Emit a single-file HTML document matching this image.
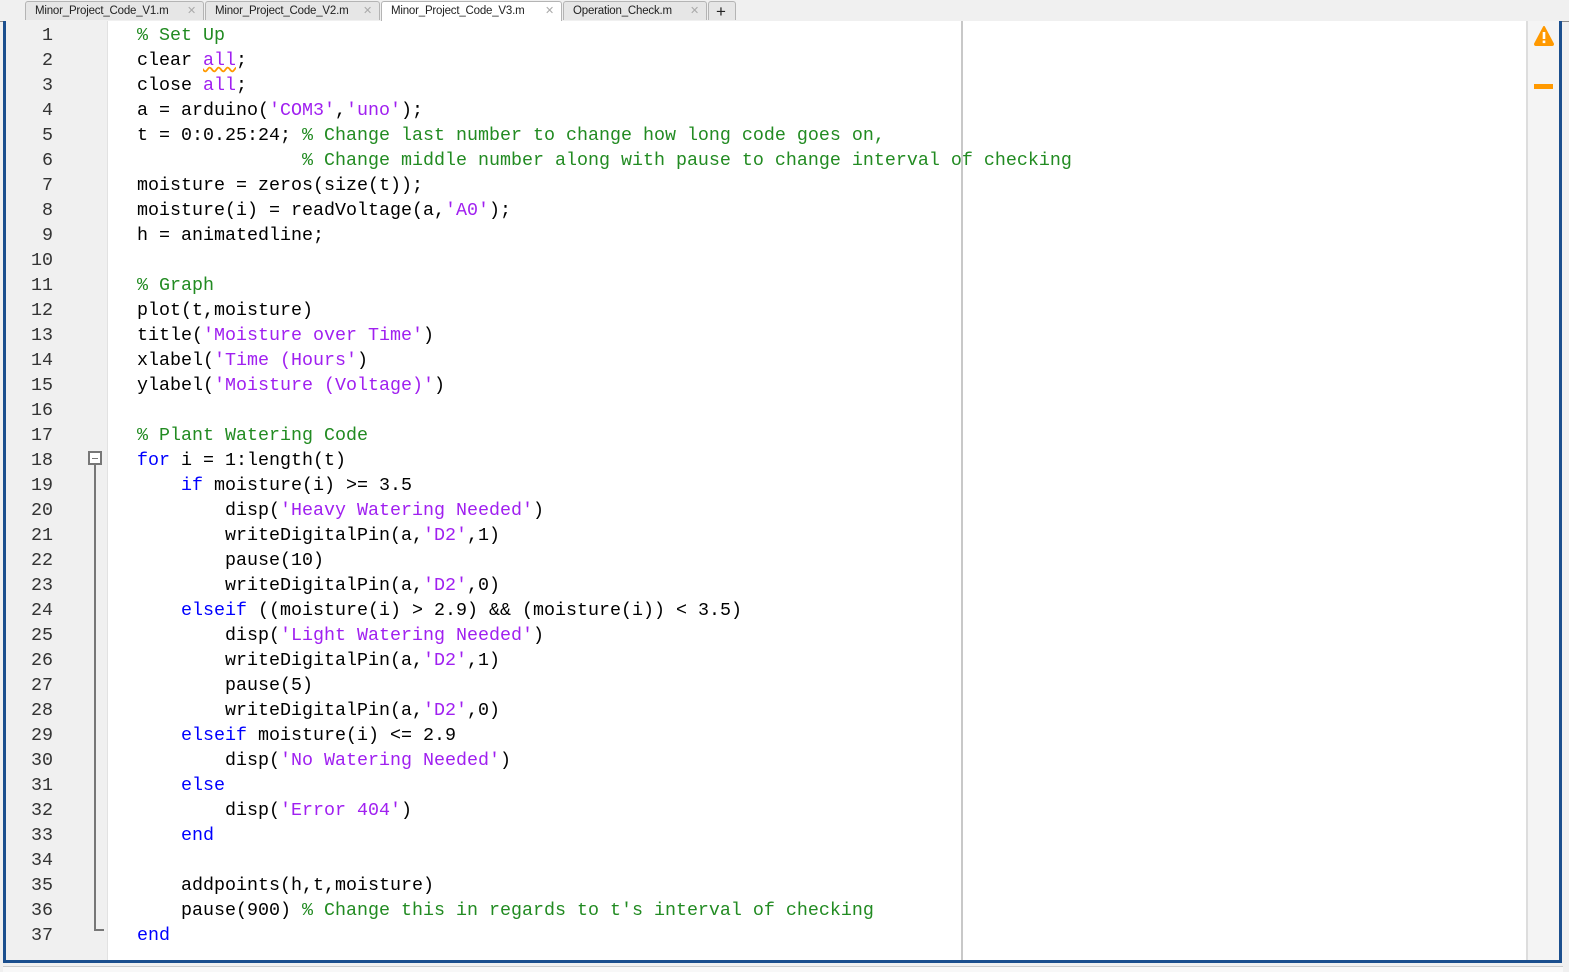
<!DOCTYPE html>
<html><head><meta charset="utf-8"><style>
body{margin:0;width:1569px;height:971px;background:#f0f0f0;position:relative;overflow:hidden;font-family:"Liberation Sans",sans-serif}
.tabs{position:absolute;left:0;top:0;width:1569px;height:21px;background:#f0f0f0;border-bottom:1px solid #8c8c8c}
.tab{position:absolute;top:1px;height:19px;background:#e6e6e6;border:1px solid #b4b4b4;border-bottom:none;border-radius:3px 3px 0 0;font-size:11.5px;letter-spacing:-0.2px;line-height:19px;color:#222;box-sizing:border-box;padding-left:9px;white-space:nowrap}
.tab .x{position:absolute;right:7px;top:0;color:#aaa;font-size:11px}
.tab.act{background:#fff;height:21px}
.ed{position:absolute;left:3px;top:21px;width:1553px;height:939px;border:3px solid #1b4f8e;border-top:none;background:#fff}
.gut{position:absolute;left:0;top:0;width:101px;height:100%;background:#f0f0f0;border-right:1px solid #e2e2e2}
.rp{position:absolute;right:0;top:0;width:31px;height:100%;background:#f4f4f4;border-left:2px solid #ddd}
.margin{position:absolute;left:955px;top:0;width:2px;height:100%;background:#c8c8c8}
.ln{position:absolute;left:0;width:48px;text-align:right;font-family:"Liberation Mono",monospace;font-size:18.33px;color:#333;line-height:25px}
.c{position:absolute;left:134px;font-family:"Liberation Mono",monospace;font-size:18.33px;line-height:25px;white-space:pre;color:#000}
.g{color:#228b22}.k{color:#0000ff}.s{color:#a020f0}
</style></head><body>
<div class="tabs">
<div class="tab" style="left:25px;width:179px">Minor_Project_Code_V1.m<span class="x">✕</span></div>
<div class="tab" style="left:205px;width:175px">Minor_Project_Code_V2.m<span class="x">✕</span></div>
<div class="tab act" style="left:381px;width:181px">Minor_Project_Code_V3.m<span class="x">✕</span></div>
<div class="tab" style="left:563px;width:144px">Operation_Check.m<span class="x">✕</span></div>
<div class="tab" style="left:708px;width:28px;font-size:17px;padding-left:7px">+</div>
</div>
<div class="ed">
<div class="gut"></div>
<div class="margin"></div>
<div class="rp">
<svg style="position:absolute;left:6px;top:5px" width="20" height="20" viewBox="0 0 20 20"><path d="M10 1 L19 18 Q19 19 18 19 L2 19 Q1 19 1 18 Z" fill="#f90" stroke="#f90" stroke-linejoin="round" stroke-width="2"/><rect x="8.7" y="6" width="2.6" height="7" fill="#fff"/><rect x="8.7" y="14.5" width="2.6" height="2.6" fill="#fff"/></svg>
<div style="position:absolute;left:6px;top:63px;width:19px;height:5px;background:#f90"></div>
</div>
<div style="position:absolute;left:82px;top:430px;width:14px;height:14px;border:2px solid #777;box-sizing:border-box;background:#fff"><div style="position:absolute;left:2px;top:5px;width:6px;height:1px;background:#777"></div></div>
<div style="position:absolute;left:88px;top:444px;width:2px;height:466px;background:#777"></div>
<div style="position:absolute;left:88px;top:908px;width:10px;height:2px;background:#777"></div>
</div>
<div style="position:absolute;left:3px;top:966px;width:1560px;height:5px;background:#f8f8f8;border-top:1px solid #ccc"></div>
<div id="lines"></div>
<script>
var L=[
'<span class="g">% Set Up</span>',
'clear <span class="s" style="text-decoration:underline wavy #f90">all</span>;',
'close <span class="s">all</span>;',
'a = arduino(<span class="s">\'COM3\'</span>,<span class="s">\'uno\'</span>);',
't = 0:0.25:24; <span class="g">% Change last number to change how long code goes on,</span>',
'               <span class="g">% Change middle number along with pause to change interval of checking</span>',
'moisture = zeros(size(t));',
'moisture(i) = readVoltage(a,<span class="s">\'A0\'</span>);',
'h = animatedline;',
'',
'<span class="g">% Graph</span>',
'plot(t,moisture)',
'title(<span class="s">\'Moisture over Time\'</span>)',
'xlabel(<span class="s">\'Time (Hours\'</span>)',
'ylabel(<span class="s">\'Moisture (Voltage)\'</span>)',
'',
'<span class="g">% Plant Watering Code</span>',
'<span class="k">for</span> i = 1:length(t)',
'    <span class="k">if</span> moisture(i) &gt;= 3.5',
'        disp(<span class="s">\'Heavy Watering Needed\'</span>)',
'        writeDigitalPin(a,<span class="s">\'D2\'</span>,1)',
'        pause(10)',
'        writeDigitalPin(a,<span class="s">\'D2\'</span>,0)',
'    <span class="k">elseif</span> ((moisture(i) &gt; 2.9) &amp;&amp; (moisture(i)) &lt; 3.5)',
'        disp(<span class="s">\'Light Watering Needed\'</span>)',
'        writeDigitalPin(a,<span class="s">\'D2\'</span>,1)',
'        pause(5)',
'        writeDigitalPin(a,<span class="s">\'D2\'</span>,0)',
'    <span class="k">elseif</span> moisture(i) &lt;= 2.9',
'        disp(<span class="s">\'No Watering Needed\'</span>)',
'    <span class="k">else</span>',
'        disp(<span class="s">\'Error 404\'</span>)',
'    <span class="k">end</span>',
'',
'    addpoints(h,t,moisture)',
'    pause(900) <span class="g">% Change this in regards to t\'s interval of checking</span>',
'<span class="k">end</span>'];
var h='';for(var i=0;i<L.length;i++){var y=23+i*25;h+='<div class="ln" style="top:'+y+'px;left:5px">'+(i+1)+'</div><div class="c" style="top:'+y+'px;left:137px">'+L[i]+'</div>';}
document.getElementById('lines').innerHTML=h;
</script>
</body></html>
